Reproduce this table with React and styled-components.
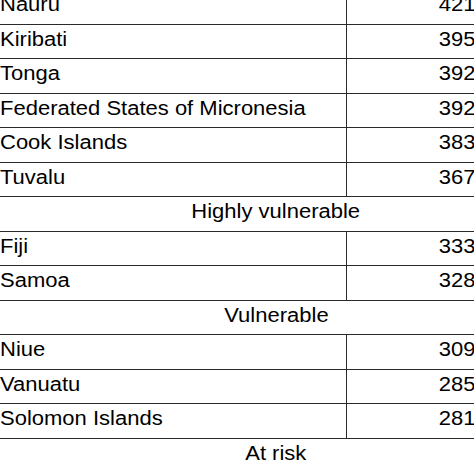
// App.jsx
// Pacific island vulnerability table (cropped view)

import styled, { createGlobalStyle } from "styled-components";

const GlobalStyle = createGlobalStyle`
    html, body {
        margin: 0;
        padding: 0;
        background: #ffffff;
    }
    body {
        font-family: "Liberation Sans", Arial, sans-serif;
        color: #000000;
    }
`;

const Frame = styled.div`
    width: 474px;
    height: 474px;
    overflow: hidden;
    background: #ffffff;
`;

const Table = styled.div`
    width: 476px;
    margin-top: -10px;
    display: flex;
    flex-direction: column;
`;

const Row = styled.div`
    display: grid;
    grid-template-columns: 346px 1fr;
    border-bottom: 1px solid #2a2a2a;
`;

const Cell = styled.div`
    height: 33.5px;
    line-height: 28px;
    font-size: 20px;
    white-space: nowrap;
    text-align: ${({ $num }) => ($num ? "right" : "left")};
    padding-right: ${({ $num }) => ($num ? "1px" : "0")};
    border-left: ${({ $num }) => ($num ? "1px solid #2a2a2a" : "none")};
`;

const Category = styled.div`
    height: 33.5px;
    line-height: 28px;
    font-size: 20px;
    text-align: center;
    padding-left: 76px;
    border-bottom: ${({ $last }) => ($last ? "none" : "1px solid #2a2a2a")};
`;

// glyphs in the source are drawn a little wider than the font
const Label = styled.span`
    display: inline-block;
    transform: scaleX(1.1);
    transform-origin: ${({ $origin }) => $origin || "left"} center;
`;

const groups = [
    {
        rows: [
            ["Nauru", 421],
            ["Kiribati", 395],
            ["Tonga", 392],
            ["Federated States of Micronesia", 392],
            ["Cook Islands", 383],
            ["Tuvalu", 367],
        ],
        title: "Highly vulnerable",
    },
    {
        rows: [
            ["Fiji", 333],
            ["Samoa", 328],
        ],
        title: "Vulnerable",
    },
    {
        rows: [
            ["Niue", 309],
            ["Vanuatu", 285],
            ["Solomon Islands", 281],
        ],
        title: "At risk",
    },
];

const App = () => {
    return (
        <>
            <GlobalStyle />
            <Frame>
                <Table>
                    {groups.map((group, i) => (
                        <div key={group.title}>
                            {group.rows.map(([name, score]) => (
                                <Row key={name}>
                                    <Cell>
                                        <Label>{name}</Label>
                                    </Cell>
                                    <Cell $num>
                                        <Label $origin="right">{score}</Label>
                                    </Cell>
                                </Row>
                            ))}
                            <Category $last={i === groups.length - 1}>
                                <Label $origin="center">{group.title}</Label>
                            </Category>
                        </div>
                    ))}
                </Table>
            </Frame>
        </>
    );
};

export default App;
